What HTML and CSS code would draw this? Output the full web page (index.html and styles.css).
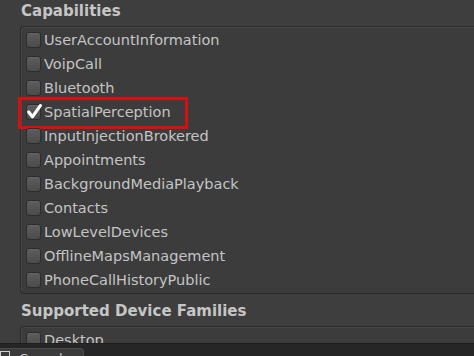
FILE: index.html
```html
<!DOCTYPE html>
<html lang="en">

<head>
    <meta charset="UTF-8">
    <title>Capabilities</title>
    <link rel="stylesheet" href="styles.css">
</head>

<body>
    <div class="panel">
        <h2 class="group-title">Capabilities</h2>
        <div class="list-box">
            <label class="item"><span class="check"></span>UserAccountInformation</label>
            <label class="item"><span class="check"></span>VoipCall</label>
            <label class="item"><span class="check"></span>Bluetooth</label>
            <label class="item highlighted"><span class="check checked">
                <svg viewBox="0 0 16 16" width="17" height="17"><path d="M2.5 8.5 L6 13 L13.5 2.5" fill="none" stroke="#fff" stroke-width="3" stroke-linecap="round" stroke-linejoin="round"/></svg>
            </span>SpatialPerception</label>
            <label class="item"><span class="check"></span>InputInjectionBrokered</label>
            <label class="item"><span class="check"></span>Appointments</label>
            <label class="item"><span class="check"></span>BackgroundMediaPlayback</label>
            <label class="item"><span class="check"></span>Contacts</label>
            <label class="item"><span class="check"></span>LowLevelDevices</label>
            <label class="item"><span class="check"></span>OfflineMapsManagement</label>
            <label class="item"><span class="check"></span>PhoneCallHistoryPublic</label>
        </div>

        <h2 class="group-title">Supported Device Families</h2>
        <div class="list-box short">
            <label class="item"><span class="check"></span>Desktop</label>
        </div>
    </div>

    <div class="bottom-bar">
        <div class="tab"><span class="tab-icon"></span>Console</div>
    </div>
</body>

</html>
```

FILE: styles.css
```css
body {
    margin: 0;
    width: 474px;
    height: 356px;
    overflow: hidden;
    background-color: #3e3e3e;
    font-family: "DejaVu Sans", Verdana, sans-serif;
    color: #c4c4c4;
}

.panel {
    height: 343px;
    overflow: hidden;
}

.group-title {
    margin: 0;
    padding-left: 21px;
    height: 26px;
    line-height: 22px;
    font-size: 15px;
    font-weight: bold;
    color: #c6c6c6;
}

.list-box {
    margin-left: 20px;
    padding-top: 1px;
    padding-bottom: 1px;
    margin-bottom: 6px;
    border-top: 1px solid #2b2b2b;
    border-left: 1px solid #2b2b2b;
    border-bottom: 1px solid #2b2b2b;
    border-top-left-radius: 4px;
    border-bottom-left-radius: 4px;
    background-color: #3c3c3c;
    box-shadow: inset 1px 1px 0 #474747;
}

.list-box.short {
    border-bottom: none;
}

.item {
    display: flex;
    align-items: center;
    height: 24px;
    padding-left: 5px;
    font-size: 14.5px;
    color: #c4c4c4;
    position: relative;
}

.check {
    display: inline-flex;
    align-items: center;
    justify-content: center;
    width: 13px;
    height: 14px;
    margin-right: 3px;
    border: 1px solid #2c2c2c;
    border-radius: 3px;
    background: linear-gradient(#5c5c5c, #4c4c4c);
    box-shadow: inset 0 1px 0 #656565;
}

.check svg {
    flex-shrink: 0;
    margin-top: -1px;
    margin-left: 2px;
}

.highlighted::after {
    content: "";
    position: absolute;
    left: -3px;
    top: -3px;
    width: 164px;
    height: 26px;
    border: 3px solid #d90f0f;
}

.bottom-bar {
    height: 13px;
    background-color: #262626;
    border-top: 1px solid #1e1e1e;
    position: relative;
}

.tab {
    position: absolute;
    left: 0;
    top: 4px;
    width: 84px;
    height: 20px;
    padding-left: 19px;
    box-sizing: border-box;
    background-color: #3b3b3b;
    border-top-right-radius: 4px;
    border-right: 1px solid #4a4a4a;
    border-top: 1px solid #4a4a4a;
    font-size: 13px;
    line-height: 20px;
    color: #c8c8c8;
}

.tab-icon {
    position: absolute;
    left: 0;
    top: 2px;
    width: 8px;
    height: 8px;
    border: 1px solid #cfcfcf;
}
```
